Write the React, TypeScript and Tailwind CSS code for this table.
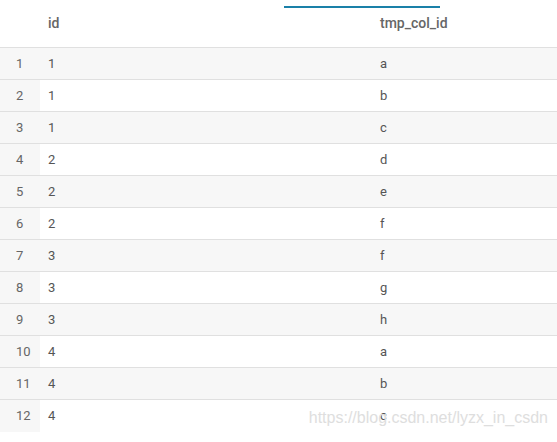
const rows: [number, string][] = [
  [1, 'a'],
  [1, 'b'],
  [1, 'c'],
  [2, 'd'],
  [2, 'e'],
  [2, 'f'],
  [3, 'f'],
  [3, 'g'],
  [3, 'h'],
  [4, 'a'],
  [4, 'b'],
  [4, 'c'],
];

export default function App() {
  return (
    <div className="relative w-[557px] h-[442px] bg-white font-['Roboto',sans-serif] text-[13px] text-[#555]">
      <div className="absolute left-[284px] top-[6px] w-[156px] h-[2px] bg-[#1a80a8]" />

      <div className="grid grid-cols-[40px_332px_1fr] h-[48px] items-center border-b border-[#e0e0e0] font-medium text-[14px] text-[#666]">
        <div />
        <div className="pl-2">id</div>
        <div className="pl-2">tmp_col_id</div>
      </div>

      {rows.map(([id, col], i) => (
        <div
          key={i}
          className={`grid grid-cols-[40px_332px_1fr] h-[32px] items-center ${
            i % 2 === 0 ? 'bg-[#f7f7f7]' : 'bg-white'
          } ${i < rows.length - 1 ? 'border-b border-[#e0e0e0]' : ''}`}
        >
          <div className="h-full flex items-center pl-4 bg-[#f7f7f7] text-[#666]">{i + 1}</div>
          <div className="pl-2">{id}</div>
          <div className="pl-2">{col}</div>
        </div>
      ))}

      <div className="absolute right-[9px] top-[406px] leading-[24px] font-['Liberation_Sans',sans-serif] text-[16px] text-[#dedede] pointer-events-none">
        https://blog.csdn.net/lyzx_in_csdn
      </div>
    </div>
  );
}
